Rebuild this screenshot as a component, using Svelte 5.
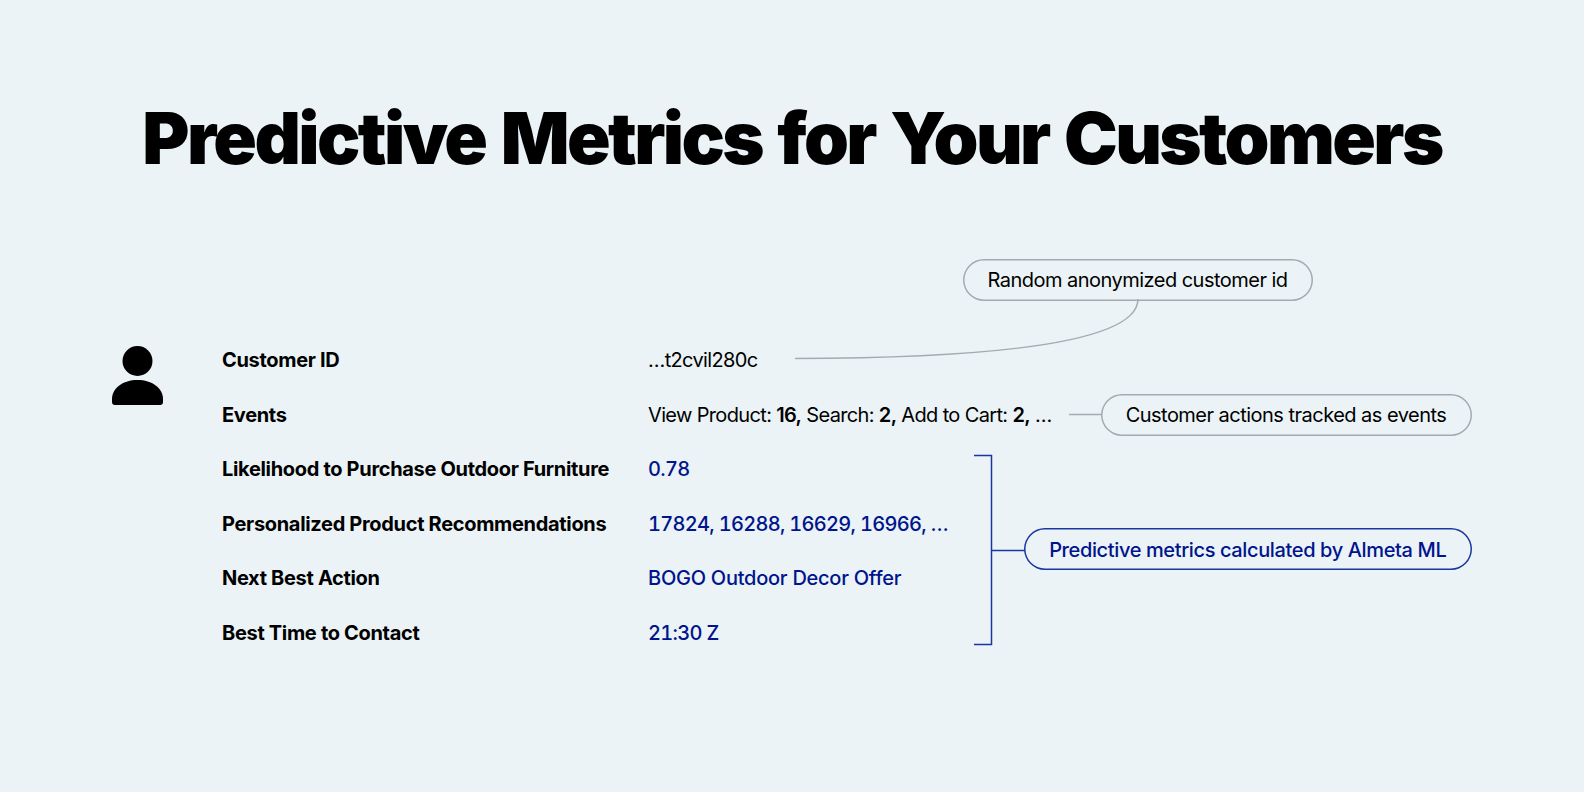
<script>
    // Left column labels with their values, top to bottom
    const rows = [
        { label: 'Customer ID', value: '…t2cvil280c' },
        { label: 'Events', events: true },
        { label: 'Likelihood to Purchase Outdoor Furniture', value: '0.78', predicted: true, digits: true },
        { label: 'Personalized Product Recommendations', value: '17824, 16288, 16629, 16966, …', predicted: true, digits: true },
        { label: 'Next Best Action', value: 'BOGO Outdoor Decor Offer', predicted: true },
        { label: 'Best Time to Contact', value: '21:30 Z', predicted: true, digits: true }
    ];
</script>

<main class="slide">
    <h1>Predictive Metrics for Your Customers</h1>

    <section class="diagram">
        <svg class="user" width="52" height="64" viewBox="0 0 52 64" aria-hidden="true">
            <circle cx="25.5" cy="15" r="15" />
            <path d="M0 53C0 42 11 34 25.500 34S51 42 51 53V56C51 58 50 59 48 59H3C1 59 0 58 0 56Z" />
        </svg>

        <div class="table">
            {#each rows as row}
                <div class="label">{row.label}</div>
                <div class="value" class:predicted={row.predicted} class:digits={row.digits}>
                    {#if row.events}
                        View Product: <b>16,</b> Search: <b>2,</b> Add to Cart: <b>2,</b> …
                    {:else}
                        {row.value}
                    {/if}
                </div>
            {/each}
        </div>

        <!-- connector lines between the table and the callouts -->
        <svg class="lines" width="1584" height="480" viewBox="0 0 1584 480" fill="none" aria-hidden="true">
            <path class="grey" d="M795 107.500C985 107 1138 93 1138 48" />
            <path class="grey" d="M1069 163.500H1101" />
            <path class="blue" d="M974 204.500H991.500V393.500H974M991.500 299.500H1025" />
        </svg>

        <div class="callout one">Random anonymized customer id</div>
        <div class="callout two">Customer actions tracked as events</div>
        <div class="callout three">Predictive metrics calculated by Almeta ML</div>
    </section>
</main>

<style>
    :global(body) {
        margin: 0;
        background: #ebf3f6;
    }

    .slide {
        height: 792px;
        overflow: hidden;
        font-family: Inter, "Liberation Sans", sans-serif;
        color: #000;
    }

    h1 {
        margin: 0;
        padding-top: 94px;
        height: 157px;
        box-sizing: content-box;
        text-align: center;
        font-size: 72px;
        line-height: 88px;
        font-weight: 900;
        letter-spacing: -2.6px;
        word-spacing: 3.5px;
    }

    .diagram {
        position: relative;
        height: 541px;
    }

    .user {
        position: absolute;
        left: 112px;
        top: 95px;
        fill: #000;
    }

    .table {
        display: grid;
        grid-template-columns: 426px 1fr;
        grid-auto-rows: 54.5px;
        padding: 82px 0 0 222px;
        font-size: 20px;
        line-height: 54.5px;
        letter-spacing: -0.65px;
    }

    .label {
        font-weight: 700;
        letter-spacing: -0.32px;
    }

    .value b {
        font-weight: 600;
    }

    .predicted {
        color: #00148c;
        font-weight: 500;
        letter-spacing: -0.25px;
    }

    .digits {
        letter-spacing: -0.7px;
        font-variant-numeric: tabular-nums;
    }

    .lines {
        position: absolute;
        left: 0;
        top: 0;
    }

    .grey {
        stroke: #a3abb0;
        stroke-width: 1.500;
    }

    .blue {
        stroke: #1a36a0;
        stroke-width: 1.500;
    }

    .callout {
        position: absolute;
        box-sizing: border-box;
        height: 41.5px;
        line-height: 43px;
        box-shadow: inset 0 0 0 1.500px #a3abb0;
        border-radius: 21px;
        text-align: center;
        font-size: 20px;
        letter-spacing: -0.52px;
        white-space: nowrap;
    }

    .one {
        left: 962.500px;
        top: 8px;
        width: 350px;
    }

    .two {
        left: 1100.500px;
        top: 143px;
        width: 371px;
    }

    .three {
        left: 1024px;
        top: 277px;
        width: 447.500px;
        height: 42px;
        color: #00148c;
        font-weight: 500;
        letter-spacing: -0.37px;
        line-height: 44px;
        box-shadow: inset 0 0 0 1.500px #1a36a0;
    }
</style>
